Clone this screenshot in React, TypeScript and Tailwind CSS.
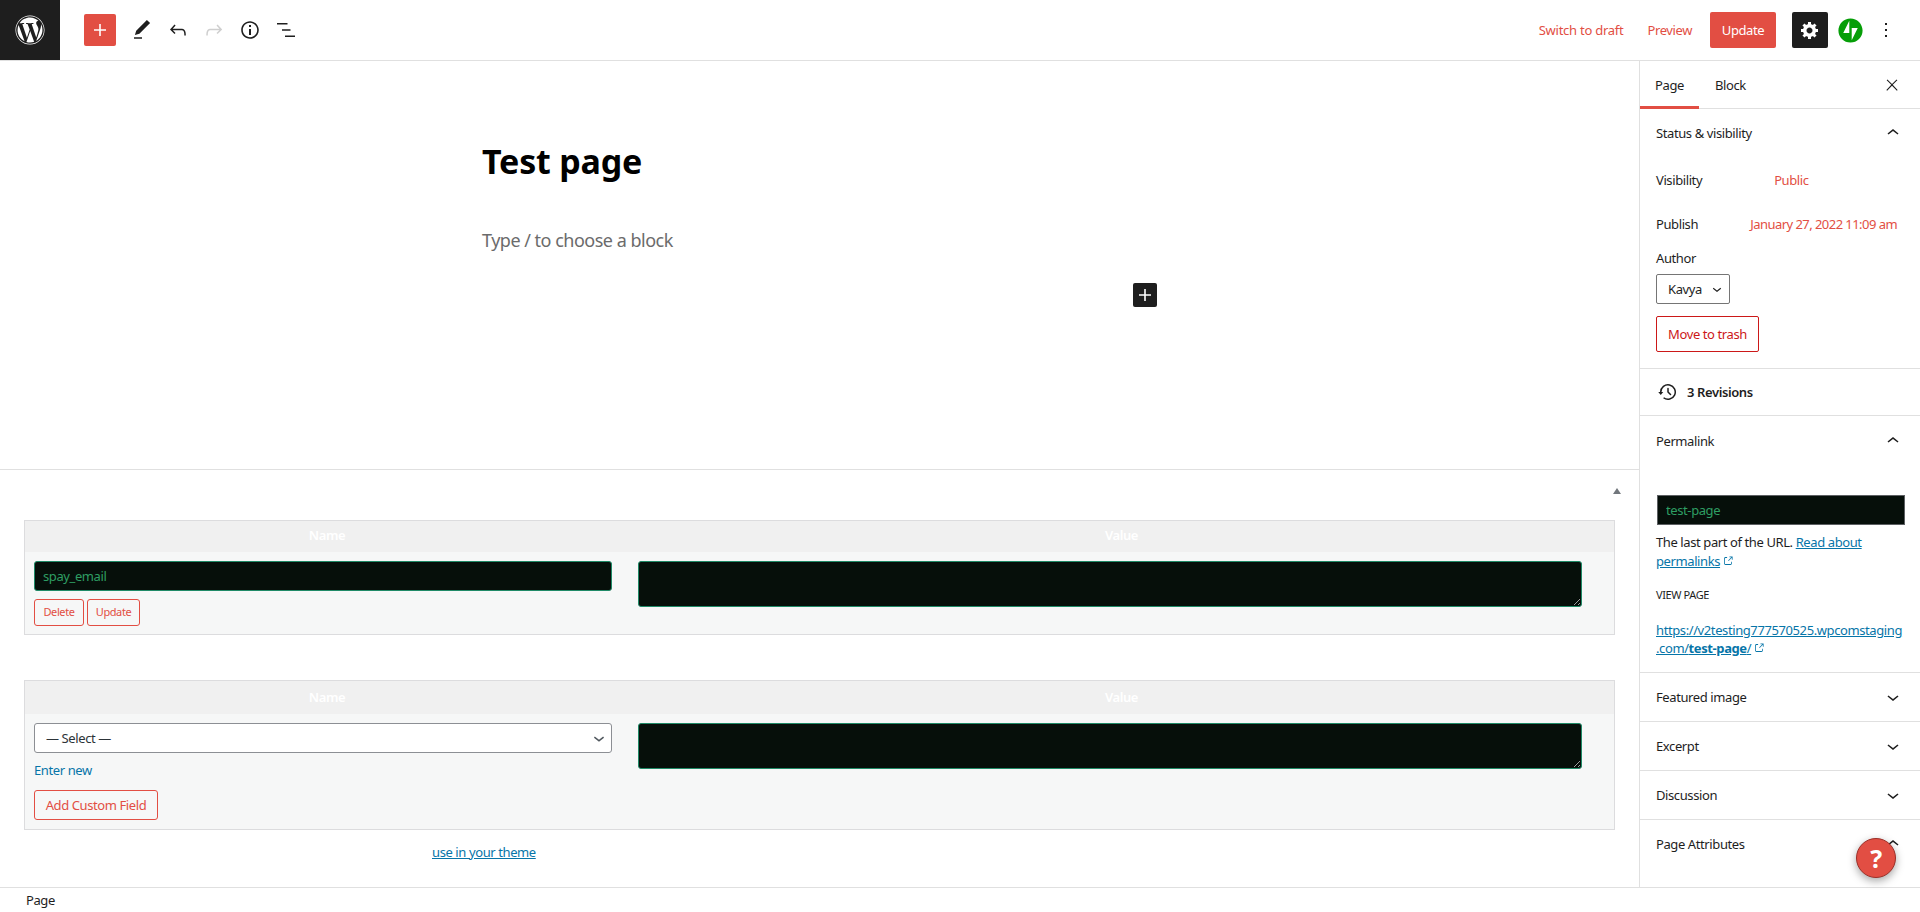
import { FaWordpress } from 'react-icons/fa'

const icons = {
  plus: 'M18 11.2h-5.2V6h-1.6v5.2H6v1.6h5.2V18h1.6v-5.2H18z',
  pencil: 'M20.1 5.1L16.9 2 6.2 12.7l-1.3 4.4 4.5-1.3L20.1 5.1zM4 20.8h8v-1.5H4v1.5z',
  undo: 'M18.3 11.7c-.6-.6-1.4-.9-2.3-.9H6.7l2.9-3.3-1.1-1-4.5 5L8.5 16l1-1-2.7-2.7H16c.5 0 .9.2 1.3.5 1 1 1 3.4 1 4.5v.3h1.5v-.2c0-1.5 0-4.3-1.5-5.7z',
  redo: 'M15.6 6.5l-1.1 1 2.9 3.3H8c-.9 0-1.7.3-2.3.9-1.4 1.5-1.4 4.2-1.4 5.6v.2h1.5v-.3c0-1.1 0-3.5 1-4.5.3-.3.7-.5 1.3-.5h9.2L14.5 15l1.1 1.1 4.6-4.6-4.6-5z',
  info: 'M12 3.2c-4.8 0-8.8 3.9-8.8 8.8 0 4.8 3.9 8.8 8.8 8.8 4.8 0 8.8-3.9 8.8-8.8 0-4.8-4-8.8-8.8-8.8zm0 16c-4 0-7.2-3.3-7.2-7.2C4.8 8 8 4.8 12 4.8s7.2 3.3 7.2 7.2c0 4-3.2 7.2-7.2 7.2zM11 17h2v-6h-2v6zm0-8h2V7h-2v2z',
  list: 'M3 5h10.5v1.5H3zM8 11.25h8.5v1.5H8zM11 17.5h10V19H11z',
  cog: 'M18 12h-2.18c-.17.7-.44 1.35-.81 1.93l1.54 1.54-2.1 2.1-1.54-1.54c-.58.36-1.23.63-1.91.79V19H8v-2.18c-.68-.16-1.33-.43-1.91-.79l-1.54 1.54-2.12-2.12 1.54-1.54c-.36-.58-.63-1.23-.79-1.91H1V9.03h2.17c.16-.7.44-1.35.8-1.94L2.43 5.55l2.1-2.1 1.54 1.54c.58-.37 1.24-.64 1.93-.81V2h3v2.18c.68.16 1.33.43 1.91.79l1.54-1.54 2.12 2.12-1.54 1.54c.36.59.64 1.24.8 1.94H18V12zm-8.5 1.5c1.66 0 3-1.34 3-3s-1.34-3-3-3-3 1.34-3 3 1.34 3 3 3z',
  more: 'M13 19h-2v-2h2v2zm0-6h-2v-2h2v2zm0-6h-2V5h2v2z',
  close: 'M13 11.8l6.1-6.3-1-1-6.1 6.2-6.1-6.2-1 1 6.1 6.3-6.5 6.7 1 1 6.5-6.6 6.5 6.6 1-1z',
  up: 'M6.5 12.4L12 8l5.5 4.4-.9 1.2L12 10l-4.5 3.6-1-1.2z',
  down: 'M17.5 11.6L12 16l-5.5-4.4.9-1.2L12 14l4.5-3.6 1 1.2z',
  backup: 'M5.5 12h1.75l-2.5 3-2.5-3H4a8 8 0 113.134 6.35l.907-1.194A6.5 6.5 0 105.5 12zm9.53 1.97l-2.28-2.28V8.5a.75.75 0 00-1.5 0V12a.747.747 0 00.218.529l2.5 2.5a.75.75 0 101.06-1.061z',
  external: 'M18.2 17c0 .7-.6 1.2-1.2 1.2H7c-.7 0-1.2-.6-1.2-1.2V7c0-.7.6-1.2 1.2-1.2h3.2V4.2H7C5.5 4.2 4.2 5.5 4.2 7v10c0 1.5 1.2 2.8 2.8 2.8h10c1.5 0 2.8-1.2 2.8-2.8v-3.6h-1.5V17zM14.9 3v1.5h3.7l-6.4 6.4 1.1 1.1 6.4-6.4v3.7h1.5V3h-6.8z',
  jetpack: 'M12 2C6.5 2 2 6.5 2 12s4.5 10 10 10 10-4.5 10-10S17.5 2 12 2zm-1 12H6l5-10v10zm2 6V10h5l-5 10z',
}

function Icon({ d, size = 24, className = '' }: { d: string; size?: number; className?: string }) {
  return (
    <svg viewBox="0 0 24 24" width={size} height={size} fill="currentColor" className={`shrink-0 ${className}`}>
      <path d={d} />
    </svg>
  )
}

function CogIcon() {
  return (
    <svg viewBox="-2 -2 24 24" width={24} height={24} fill="currentColor">
      <path d={icons.cog} />
    </svg>
  )
}

function ToolButton({ d, muted }: { d: string; muted?: boolean }) {
  return (
    <button className={`flex h-9 w-9 items-center justify-center ${muted ? 'text-[#cfcfcf]' : 'text-[#1e1e1e]'}`}>
      <Icon d={d} />
    </button>
  )
}

function Header() {
  return (
    <header className="flex h-[61px] shrink-0 items-center border-b border-[#e0e0e0] bg-white">
      <div className="flex h-[60px] w-[60px] items-center justify-center bg-[#1e1e1e] text-white">
        <FaWordpress size={30} />
      </div>
      <button className="ml-6 flex h-8 w-8 items-center justify-center rounded-[2px] bg-[#e24e43] text-white">
        <Icon d={icons.plus} />
      </button>
      <div className="ml-2 flex items-center">
        <ToolButton d={icons.pencil} />
        <ToolButton d={icons.undo} />
        <ToolButton d={icons.redo} muted />
        <ToolButton d={icons.info} />
        <ToolButton d={icons.list} />
      </div>
      <div className="ml-auto flex items-center text-[13px] text-[#e24e43]">
        <span className="pt-[2px] tracking-[-0.25px]">Switch to draft</span>
        <span className="ml-6 pt-[2px]">Preview</span>
        <button className="ml-[18px] h-9 w-[66px] rounded-[2px] bg-[#e24e43] pt-[2px] text-white">Update</button>
        <button className="ml-4 flex h-9 w-9 items-center justify-center rounded-[2px] bg-[#1e1e1e] text-white">
          <CogIcon />
        </button>
        <Icon d={icons.jetpack} size={29} className="ml-[8px] text-[#069e08]" />
        <span className="mr-[22px] ml-[9px] text-[#1e1e1e]">
          <Icon d={icons.more} />
        </span>
      </div>
    </header>
  )
}

function FieldHead({ h }: { h: string }) {
  return (
    <div className={`grid grid-cols-[604px_1fr] bg-[#f0f0f0] text-center text-[13px] leading-none font-semibold text-white ${h}`}>
      <div className="flex items-center justify-center">Name</div>
      <div className="flex items-center justify-center">Value</div>
    </div>
  )
}

function DarkArea() {
  return (
    <textarea
      readOnly
      className="block h-[46px] w-[944px] rounded-[3px] border border-[#1f8a67] bg-[#060f0a]"
    />
  )
}

function MetaBoxes() {
  return (
    <section className="flex-1 px-6">
      <div className="flex h-[50px] items-center justify-end">
        <span className="mt-[-8px] mr-[-6px] h-0 w-0 border-x-4 border-b-[6px] border-x-transparent border-b-[#72777c]" />
      </div>
      <div className="h-[115px] border border-[#dcdcde] bg-[#f6f7f7]">
        <FieldHead h="h-[31px] pb-[2px]" />
        <div className="grid grid-cols-[604px_1fr] pt-[9px]">
          <div className="pl-[9px]">
            <input
              readOnly
              defaultValue="spay_email"
              className="block h-[30px] w-[578px] rounded-[3px] border border-[#1f8a67] bg-[#060f0a] px-2 text-[13px] text-[#2e9e63] outline-none"
            />
            <div className="mt-[8px] flex gap-[3px]">
              <button className="h-[27px] w-[50px] rounded-[3px] border border-[#e24e43] text-[11px] text-[#e24e43]">Delete</button>
              <button className="h-[27px] w-[53px] rounded-[3px] border border-[#e24e43] text-[11px] text-[#e24e43]">Update</button>
            </div>
          </div>
          <div className="pl-[9px]">
            <DarkArea />
          </div>
        </div>
      </div>
      <div className="mt-[45px] h-[150px] border border-[#dcdcde] bg-[#f6f7f7]">
        <FieldHead h="h-[33px]" />
        <div className="grid grid-cols-[604px_1fr] pt-[9px]">
          <div className="pl-[9px]">
            <div className="relative w-[578px]">
              <select className="block h-[30px] w-full appearance-none rounded-[3px] border border-[#8c8f94] bg-white pt-[2px] pl-[11px] text-[13px] text-[#2c3338]">
                <option>— Select —</option>
              </select>
              <Icon d={icons.down} size={22} className="absolute top-1 right-[2px] text-[#50575e]" />
            </div>
            <div className="mt-[8px] text-[13px] leading-[18px] text-[#0675a8]">Enter new</div>
            <button className="mt-[11px] h-[30px] w-[124px] rounded-[3px] border border-[#e24e43] pt-[2px] text-[13px] text-[#e24e43]">Add Custom Field</button>
          </div>
          <div className="pl-[9px]">
            <DarkArea />
          </div>
        </div>
      </div>
      <div className="mt-[13px] pl-[408px] text-[13px] leading-[18px] text-[#0675a8] underline">use in your theme</div>
    </section>
  )
}

function PanelHead({ title, open }: { title: string; open?: boolean }) {
  return (
    <div className="flex items-center justify-between">
      <span className="pt-[2px]">{title}</span>
      <Icon d={open ? icons.up : icons.down} className="mr-[-1px]" />
    </div>
  )
}

function ClosedPanel({ title }: { title: string }) {
  return (
    <div className="flex h-[49px] items-center border-b border-[#e0e0e0] px-4">
      <div className="flex-1">
        <PanelHead title={title} />
      </div>
    </div>
  )
}

function Sidebar() {
  return (
    <aside className="relative w-[281px] shrink-0 border-l border-[#e0e0e0] bg-white text-[13px] text-[#1e1e1e]">
      <div className="flex h-[48px] items-center border-b border-[#e0e0e0]">
        <div className="flex h-[48px] w-[59px] items-center justify-center border-b-[3px] border-[#e24e43] pt-[5px]">Page</div>
        <div className="ml-[16px] pt-[2px]">Block</div>
        <Icon d={icons.close} size={18} className="mr-[19px] ml-auto" />
      </div>
      <div className="h-[260px] border-b border-[#e0e0e0] px-4 pt-[12px]">
        <PanelHead title="Status &amp; visibility" open />
        <div className="mt-[27px] flex h-[18px] items-center">
          <span>Visibility</span>
          <span className="ml-[72px] text-[#e24e43]">Public</span>
        </div>
        <div className="mt-[26px] flex h-[18px] items-center justify-between">
          <span>Publish</span>
          <span className="mr-[7px] tracking-[-0.55px] text-[#e24e43]">January 27, 2022 11:09 am</span>
        </div>
        <div className="mt-[15px] leading-[18px]">Author</div>
        <div className="relative mt-[7px] flex h-[30px] w-[74px] items-center rounded-[2px] border border-[#757575] pt-[2px] pl-[11px]">
          Kavya
          <Icon d={icons.down} size={18} className="absolute top-[5px] right-[3px]" />
        </div>
        <button className="mt-[12px] h-9 w-[103px] rounded-[2px] border border-[#cc1818] pt-[2px] text-[#cc1818]">Move to trash</button>
      </div>
      <div className="flex h-[47px] items-center border-b border-[#e0e0e0] pl-4 font-semibold">
        <Icon d={icons.backup} className="mr-[7px]" />
        <span className="pt-[2px]">3 Revisions</span>
      </div>
      <div className="h-[257px] border-b border-[#e0e0e0] px-4 pt-[13px]">
        <PanelHead title="Permalink" open />
        <input
          readOnly
          defaultValue="test-page"
          className="mt-[42px] ml-px block h-[30px] w-[248px] border border-[#5d6063] bg-[#060f0a] px-2 text-[13px] text-[#2e9e63] outline-none"
        />
        <p className="mt-[8px] leading-[19px]">
          The last part of the URL. <span className="text-[#0675a8] underline">Read about<br />permalinks</span>
          <Icon d={icons.external} size={12} className="ml-[2px] inline align-[-1px] text-[#0675a8]" />
        </p>
        <div className="mt-[16px] text-[11px] leading-[16px] uppercase">View page</div>
        <p className="mt-[18px] leading-[18px] whitespace-nowrap text-[#0675a8]">
          <span className="underline">https://v2testing777570525.wpcomstaging<br />.com/<b>test-page</b>/</span>
          <Icon d={icons.external} size={12} className="ml-[2px] inline align-[-1px]" />
        </p>
      </div>
      <ClosedPanel title="Featured image" />
      <ClosedPanel title="Excerpt" />
      <ClosedPanel title="Discussion" />
      <div className="px-4 pt-[12px]">
        <PanelHead title="Page Attributes" open />
      </div>
      <button className="absolute top-[777px] left-[216px] flex h-10 w-10 items-center justify-center rounded-full border border-[#9c2f28] bg-[#e24e43] text-[25px] leading-none font-bold text-white shadow-[0_3px_8px_rgba(0,0,0,0.35)]">?</button>
    </aside>
  )
}

export default function App() {
  return (
    <div className="flex h-screen flex-col overflow-hidden bg-white font-['Noto_Sans',sans-serif] tracking-[-0.4px] text-[#1e1e1e]">
      <Header />
      <div className="flex min-h-0 flex-1">
        <main className="flex min-w-0 flex-1 flex-col">
          <div className="relative h-[409px] shrink-0 border-b border-[#e0e0e0]">
            <div className="mx-auto w-[675px] pt-[75px]">
              <h1 className="text-[34px] leading-[50px] font-bold tracking-[-0.2px] text-black">Test page</h1>
              <p className="mt-[40px] text-[18px] leading-[28px] tracking-[-0.5px] text-[#6b6b6b]">Type / to choose a block</p>
            </div>
            <button className="absolute top-[222px] left-[1133px] flex h-6 w-6 items-center justify-center rounded-[2px] bg-[#1e1e1e] text-white">
              <Icon d={icons.plus} />
            </button>
          </div>
          <MetaBoxes />
        </main>
        <Sidebar />
      </div>
      <footer className="flex h-[25px] shrink-0 items-center border-t border-[#e0e0e0] pt-[2px] pl-[26px] text-[13px]">Page</footer>
    </div>
  )
}
